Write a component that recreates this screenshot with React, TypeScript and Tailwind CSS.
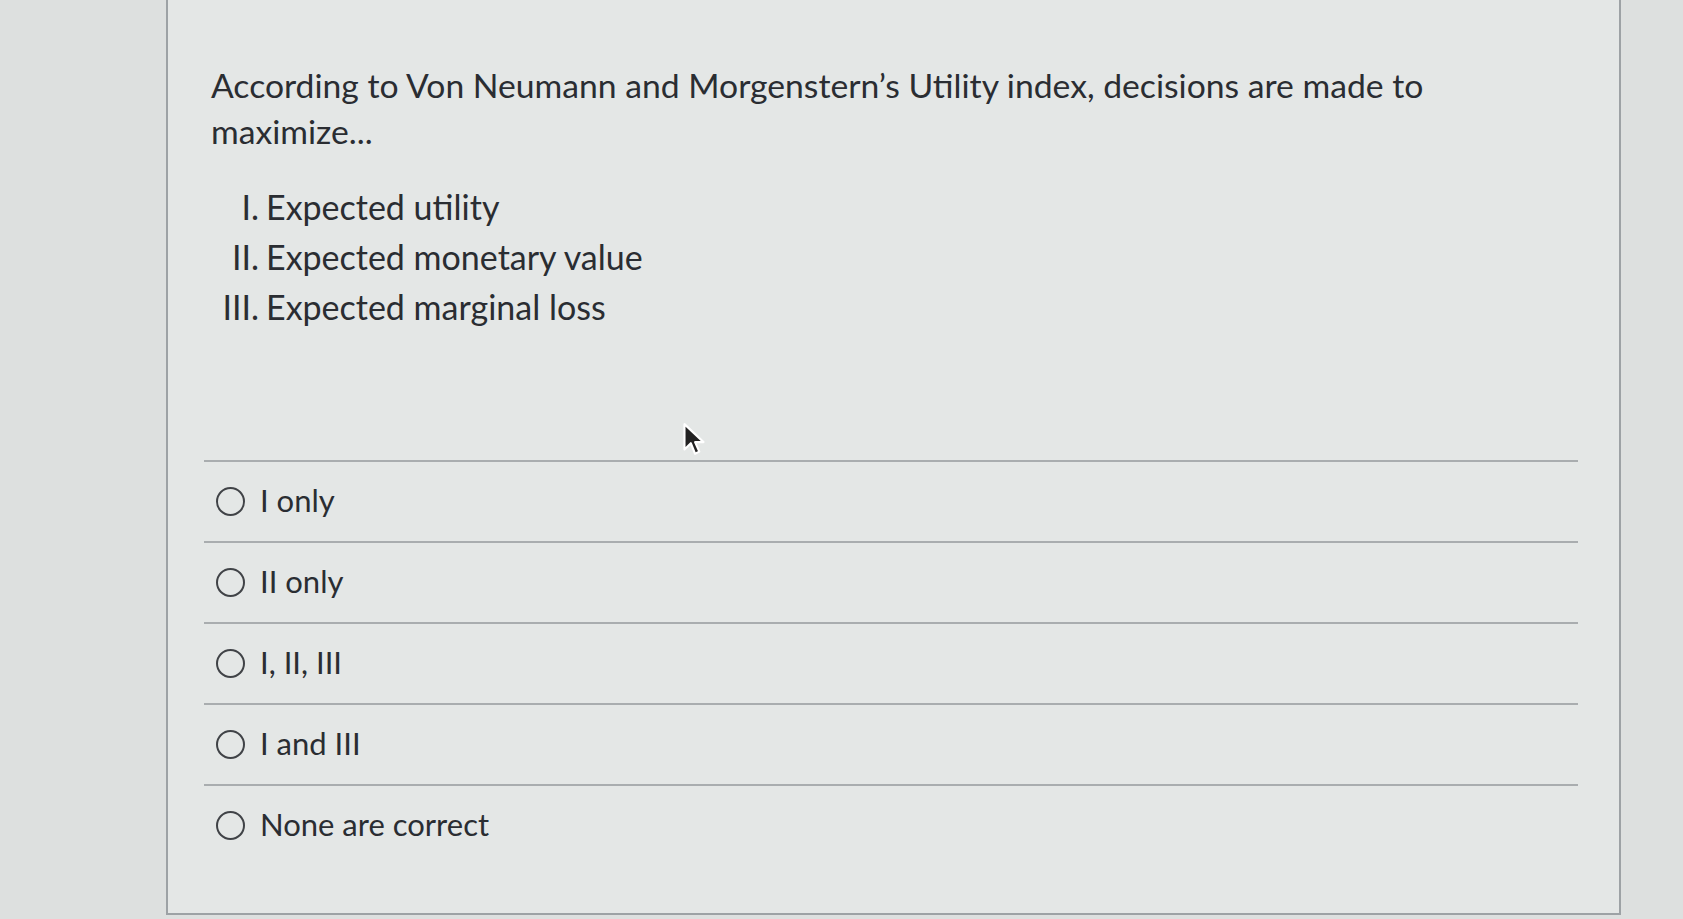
import React from "react";

const options = ["I only", "II only", "I, II, III", "I and III", "None are correct"];
const items: [string, string][] = [
  ["I.", "Expected utility"],
  ["II.", "Expected monetary value"],
  ["III.", "Expected marginal loss"],
];

export default function App() {
  return (
    <div
      className="relative w-[1683px] h-[919px] overflow-hidden bg-[#dde0df] flex"
      style={{ fontFamily: "Lato, 'Open Sans', sans-serif" }}
    >
      <div className="ml-[166px] w-[1455px] h-[915px] bg-[#e4e7e6] border-l-2 border-r-2 border-b-2 border-[#9da2a5] flex flex-col pt-[62px] pl-[43px] text-[#2a2d32]">
        <p className="text-[33.7px] leading-[46px] w-[1330px]">
          According to Von Neumann and Morgenstern’s Utility index, decisions are made to maximize...
        </p>
        <div className="mt-[28px] flex flex-col">
          {items.map(([m, t]) => (
            <div key={m} className="flex text-[34px] leading-[50px]">
              <span className="w-[48px] text-right">{m}</span>
              <span className="ml-[7px]">{t}</span>
            </div>
          ))}
        </div>
        <div className="mt-[128px] -ml-[7px] w-[1374px] flex flex-col">
          {options.map((o) => (
            <div key={o} className="h-[81px] border-t-2 border-[#a9adaf] flex items-center">
              <span className="ml-[12px] w-[29px] h-[29px] rounded-full border-2 border-[#404347]" />
              <span className="ml-[15px] text-[31px] leading-none -mt-[3px]">{o}</span>
            </div>
          ))}
        </div>
      </div>
      <svg className="absolute left-[682px] top-[422px]" width="24" height="36" viewBox="0 0 22 34">
        <path d="M2 2 L2 26 L8 20 L12 30 L16 28 L12 19 L20 19 Z" fill="#222" stroke="#fff" strokeWidth="2" strokeLinejoin="round" />
      </svg>
    </div>
  );
}
